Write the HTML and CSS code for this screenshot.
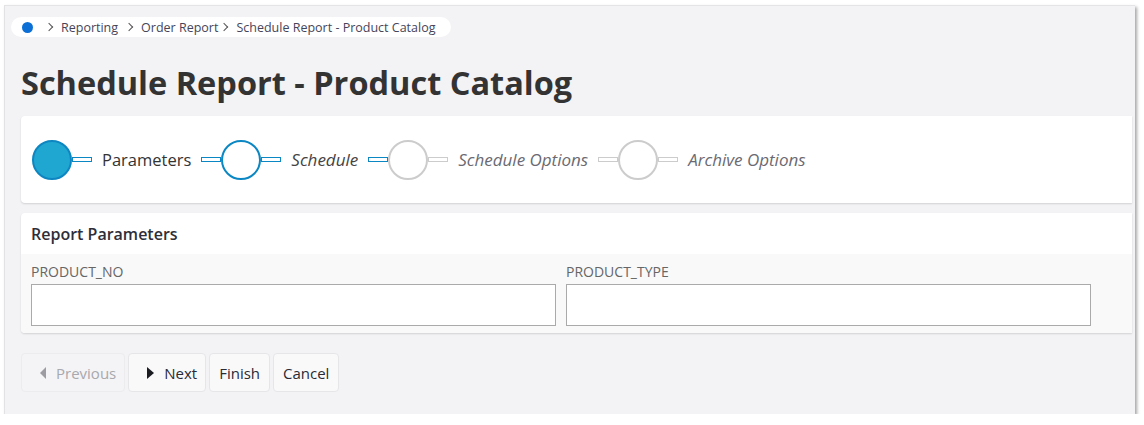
FILE: index.html
```html
<!DOCTYPE html>
<html lang="en">
<head>
  <meta charset="UTF-8">
  <title>Schedule Report - Product Catalog</title>
  <link rel="stylesheet" href="styles.css">
</head>
<body>

<div class="window">
  <div class="breadcrumb">
    <span class="home-dot"></span>
    <span class="chevron"></span>
    <span class="crumb">Reporting</span>
    <span class="chevron"></span>
    <span class="crumb tight">Order Report</span>
    <span class="chevron"></span>
    <span class="crumb">Schedule Report - Product Catalog</span>
  </div>

  <div class="content">
    <h1 class="page-title">Schedule Report - Product Catalog</h1>

    <div class="card steps">
      <span class="step-circle done"></span>
      <span class="step-line"></span>
      <span class="step-label current">Parameters</span>
      <span class="step-line"></span>
      <span class="step-circle next"></span>
      <span class="step-line"></span>
      <span class="step-label">Schedule</span>
      <span class="step-line"></span>
      <span class="step-circle"></span>
      <span class="step-line off"></span>
      <span class="step-label off">Schedule Options</span>
      <span class="step-line off"></span>
      <span class="step-circle"></span>
      <span class="step-line off"></span>
      <span class="step-label off">Archive Options</span>
    </div>

    <div class="card params">
      <div class="params-header">Report Parameters</div>
      <div class="params-body">
        <div class="field">
          <label class="field-label">PRODUCT_NO</label>
          <input class="field-input" type="text">
        </div>
        <div class="field">
          <label class="field-label">PRODUCT_TYPE</label>
          <input class="field-input" type="text">
        </div>
      </div>
    </div>

    <div class="buttons">
      <button class="btn icon-btn" disabled><span class="tri-left"></span>Previous</button>
      <button class="btn icon-btn"><span class="tri-right"></span>Next</button>
      <button class="btn">Finish</button>
      <button class="btn">Cancel</button>
    </div>
  </div>
</div>

</body>
</html>
```

FILE: styles.css
```css
body {
  margin: 0;
  background: #fff;
  font-family: 'Open Sans', sans-serif;
  color: #333;
}

.window {
  margin: 5px 0 0 4px;
  width: 1131px;
  height: 409px;
  box-sizing: border-box;
  border-left: 1px solid #e2e2e4;
  border-top: 1px solid #e4e4e6;
  background: #f3f2f5;
  box-shadow: 2px 2px 3px rgba(0, 0, 0, 0.35);
  overflow: hidden;
  padding: 11px 0 0 6px;
}

/* breadcrumb */
.breadcrumb {
  display: flex;
  width: fit-content;
  align-items: center;
  height: 20px;
  padding: 0 15px 0 11px;
  background: #fff;
  border-radius: 10px;
  font-size: 12.5px;
  color: #45455a;
}

.home-dot {
  width: 11px;
  height: 11px;
  border-radius: 50%;
  background: #0b6fd6;
  margin-right: 14px;
}

.chevron {
  width: 5px;
  height: 5px;
  border-top: 1px solid #555;
  border-right: 1px solid #555;
  transform: rotate(45deg);
  margin: 0 9px 0 -1px;
}

.crumb {
  margin-right: 9px;
}

.crumb.tight {
  margin-right: 4px;
}

.crumb:last-child {
  margin-right: 0;
}

/* main column */
.content {
  padding: 0 3px 0 10px;
}

.page-title {
  margin: 23px 0 10px;
  font-size: 32.5px;
  line-height: 46px;
  font-weight: 700;
  color: #333;
}

.card {
  background: #fff;
  border-radius: 4px 0 0 4px;
  box-shadow: 0 1px 2px rgba(0, 0, 0, 0.14);
}

/* wizard steps */
.steps {
  display: flex;
  align-items: center;
  height: 87px;
  padding-left: 11px;
}

.step-circle {
  width: 40px;
  height: 40px;
  box-sizing: border-box;
  border-radius: 50%;
  border: 2px solid #cccccc;
  background: #fff;
}

.step-circle.done {
  background: #1fa6d1;
  border-color: #0d86c1;
}

.step-circle.next {
  border-color: #0b87c3;
}

.step-line {
  width: 20px;
  height: 5px;
  box-sizing: border-box;
  border: 1.5px solid #0b87c3;
  background: #fff;
}

.step-line.off {
  border-color: #cccccc;
}

.step-label {
  margin: 0 10px;
  font-size: 17px;
  font-style: italic;
  color: #444;
}

.step-label.current {
  font-style: normal;
  font-size: 16.5px;
  color: #333;
}

.step-label.off {
  color: #6a6a72;
}

/* report parameters */
.params {
  margin-top: 10px;
  overflow: hidden;
}

.params-header {
  height: 41px;
  display: flex;
  align-items: center;
  padding-left: 10px;
  font-size: 16px;
  font-weight: 600;
  color: #2e2e38;
}

.params-body {
  display: grid;
  grid-template-columns: 525px 525px;
  gap: 10px;
  padding: 9px 10px 7px;
  background: #f9f9f9;
}

.field-label {
  display: block;
  font-size: 14px;
  line-height: 18px;
  margin-bottom: 3px;
  color: #666;
}

.field-input {
  display: block;
  width: 100%;
  height: 42px;
  box-sizing: border-box;
  border: 1px solid #aaa;
  background: #fff;
  margin: 0;
}

/* buttons */
.buttons {
  display: flex;
  gap: 3px;
  margin-top: 20px;
}

.btn {
  height: 39px;
  padding: 0 9px;
  display: flex;
  align-items: center;
  font-family: 'Open Sans', sans-serif;
  font-size: 15px;
  color: #2b2b33;
  background: #f9f9fa;
  border: 1px solid #e6e6e9;
  border-radius: 4px;
}

.btn:disabled {
  color: #a8a8ad;
  background: #f4f4f6;
  border-color: #ececee;
}

.icon-btn {
  padding: 0 8px 0 18px;
}

.tri-right,
.tri-left {
  width: 0;
  height: 0;
  border-top: 6px solid transparent;
  border-bottom: 6px solid transparent;
  margin-right: 10px;
}

.tri-right {
  border-left: 7px solid #1b1b22;
}

.tri-left {
  border-right: 6px solid #9c9ca2;
}
```
